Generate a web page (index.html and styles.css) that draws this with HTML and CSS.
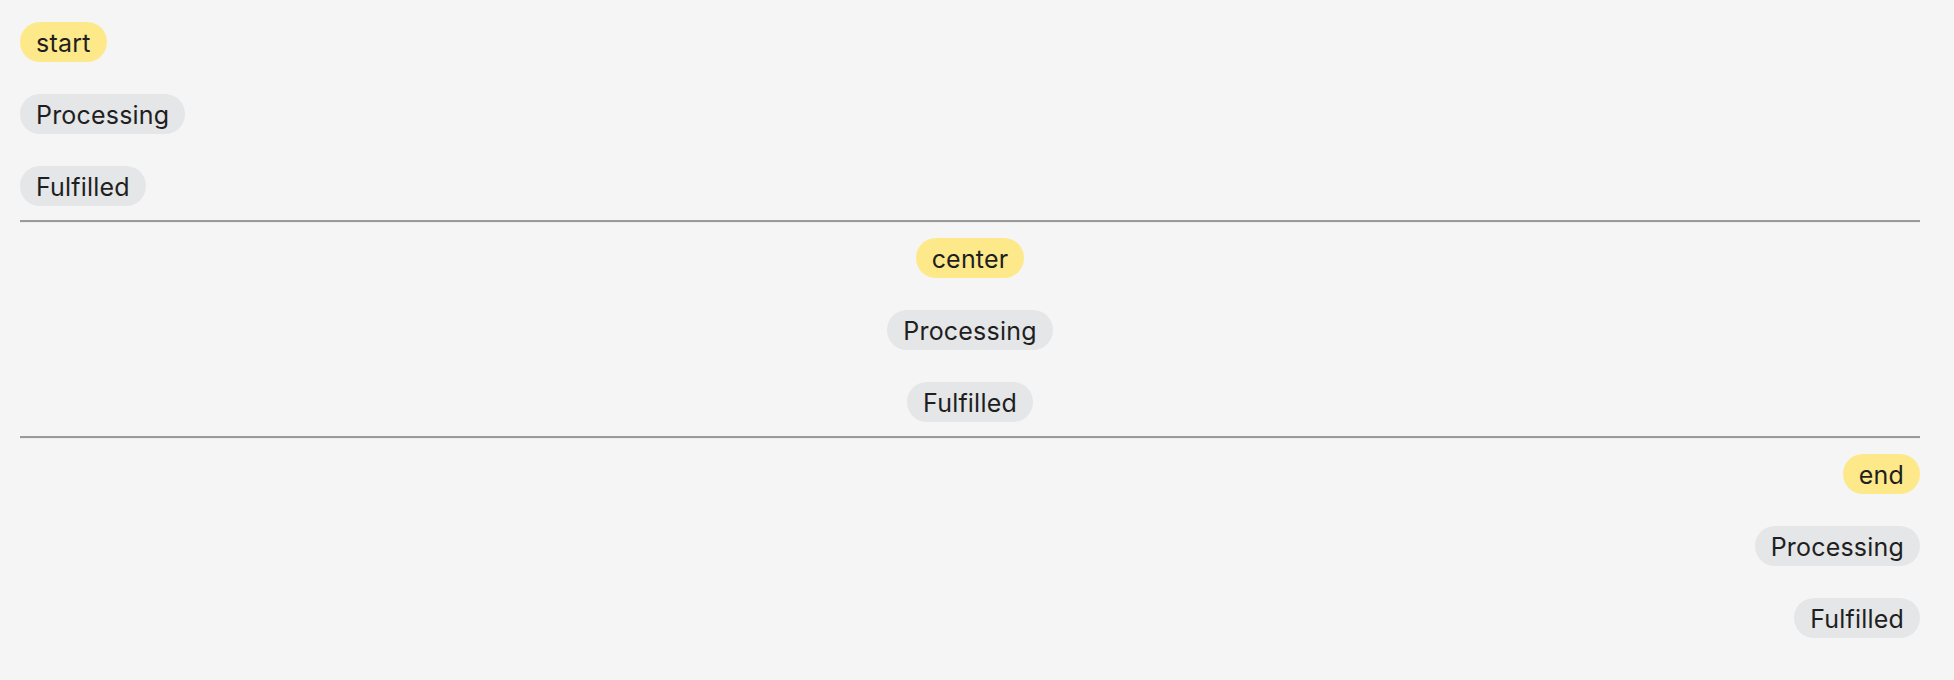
FILE: index.html
```html
<!DOCTYPE html>
<html>
<head>
<meta charset="utf-8">
<link rel="stylesheet" href="styles.css">
</head>
<body>
<div class="page">
  <div class="group group-start">
    <span class="tag tag-accent">start</span>
    <span class="tag">Processing</span>
    <span class="tag">Fulfilled</span>
  </div>
  <hr class="divider">
  <div class="group group-center">
    <span class="tag tag-accent">center</span>
    <span class="tag">Processing</span>
    <span class="tag">Fulfilled</span>
  </div>
  <hr class="divider">
  <div class="group group-end">
    <span class="tag tag-accent">end</span>
    <span class="tag">Processing</span>
    <span class="tag">Fulfilled</span>
  </div>
</div>
</body>
</html>
```
FILE: styles.css
```css
html, body {
  margin: 0;
  padding: 0;
  background: #f5f5f5;
}
body {
  font-family: Inter, "Noto Sans", sans-serif;
  color: #1f1f1f;
}
.page {
  padding: 22px 34px 0 20px;
}
.group {
  display: flex;
  flex-direction: column;
  gap: 32px;
}
.group-start { align-items: flex-start; }
.group-center { align-items: center; }
.group-end { align-items: flex-end; }
.tag {
  display: inline-flex;
  align-items: center;
  height: 40px;
  padding: 2px 16px 0;
  border-radius: 20px;
  background: #e5e6e8;
  font-size: 25px;
  letter-spacing: 0.2px;
  box-sizing: border-box;
}
.tag-accent {
  background: #fee98a;
}
.divider {
  margin: 14px 0 15px;
  height: 0;
  border: 0;
  border-top: 2px solid #9a9a9a;
  border-bottom: 1px solid #ebebeb;
}
```
